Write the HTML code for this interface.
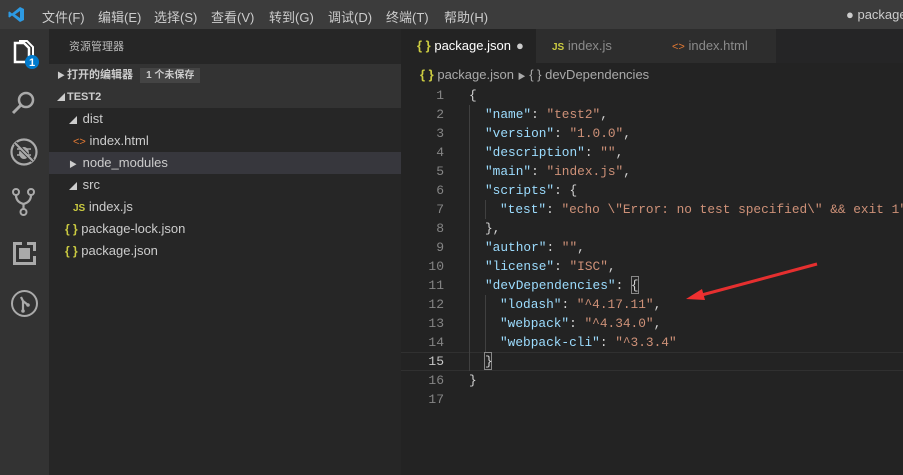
<!DOCTYPE html>
<html><head><meta charset="utf-8"><style>
*{margin:0;padding:0;box-sizing:border-box}
body{width:903px;height:475px;overflow:hidden;background:#232323;font-family:"Liberation Sans","Noto Sans CJK SC",sans-serif;position:relative;color:#ccc}
.abs{position:absolute}
#title{left:0;top:0;width:903px;height:29px;background:#3c3c3c;font-size:13px;color:#ccc;overflow:hidden}
#title span{position:absolute;top:7px;white-space:nowrap}
#act{left:0;top:29px;width:49px;height:446px;background:#333}
#side{left:49px;top:29px;width:352px;height:446px;background:#262626}
.row{position:absolute;left:0;width:352px;height:22px;line-height:22px;font-size:13px;color:#ccc;white-space:nowrap}
.tri{display:inline-block;font-size:8px;color:#ccc;width:10px}
#tabs{left:401px;top:29px;width:502px;height:34px;background:#252526}
.tab{position:absolute;top:0;height:34px;line-height:33px;font-size:13px;padding-left:16px;background:#2d2d2d;color:#8b8b8b;white-space:nowrap}
.code{position:absolute;left:401px;font-family:"Liberation Mono",monospace;font-size:12.8px;height:19px;line-height:19px;white-space:pre}
.ln{position:absolute;left:401px;width:43px;text-align:right;font-family:"Liberation Mono",monospace;font-size:13px;color:#858585;height:19px;line-height:19px}
.k{color:#9cdcfe}.s{color:#ce9178}.p{color:#d4d4d4}
.y{color:#cbcb41;font-weight:bold}
.o{color:#e37933}
</style></head><body>
<div id="title" class="abs">
<svg class="abs" style="left:8px;top:6px" width="17" height="17" viewBox="0 0 17 17"><path d="M12 1 L16 3 V14 L12 16 L4 9.5 L1.5 11.5 L0.5 11 V6 L1.5 5.5 L4 7.5 Z M12 5 L7 8.5 L12 12 Z" fill="#2d9ae3" fill-rule="evenodd"/></svg>
<span style="left:42px">文件(F)</span><span style="left:98px">编辑(E)</span><span style="left:154px">选择(S)</span><span style="left:211px">查看(V)</span><span style="left:269px">转到(G)</span><span style="left:328px">调试(D)</span><span style="left:386px">终端(T)</span><span style="left:444px">帮助(H)</span>
<span style="left:846px">● package.json</span>
</div>
<div id="act" class="abs">
<svg class="abs" style="left:10px;top:11px" width="30" height="30" viewBox="0 0 30 30"><path d="M5 3 h9 l5 5 v14 h-14 z" fill="none" stroke="#fff" stroke-width="2.5"/><path d="M9 1 h8 l6 6 v12" fill="none" stroke="#fff" stroke-width="2"/><circle cx="22" cy="22" r="7" fill="#007acc"/><text x="22" y="26" font-size="11" fill="#fff" text-anchor="middle" font-family="Liberation Sans" font-weight="bold">1</text></svg>
<svg class="abs" style="left:10px;top:60px" width="28" height="28" viewBox="0 0 28 28"><circle cx="16" cy="11" r="7" fill="none" stroke="#aaa" stroke-width="2.5"/><path d="M11 16 L3 24" stroke="#aaa" stroke-width="3"/></svg>
<svg class="abs" style="left:9px;top:108px" width="30" height="30" viewBox="0 0 30 30"><circle cx="15" cy="15" r="12.5" fill="none" stroke="#aaa" stroke-width="2.2"/><ellipse cx="15" cy="16" rx="5" ry="6" fill="#aaa"/><path d="M6 6 L24 24" stroke="#333" stroke-width="4"/><path d="M6 6 L24 24" stroke="#aaa" stroke-width="2"/><path d="M8 12 h4 M18 12 h4 M8 18 h4 M18 18 h4" stroke="#aaa" stroke-width="1.5"/></svg>
<svg class="abs" style="left:11px;top:158px" width="26" height="30" viewBox="0 0 26 30"><circle cx="5" cy="5" r="3" fill="none" stroke="#aaa" stroke-width="2"/><circle cx="20" cy="5" r="3" fill="none" stroke="#aaa" stroke-width="2"/><circle cx="12.5" cy="25" r="3" fill="none" stroke="#aaa" stroke-width="2"/><path d="M5 8 Q5 15 12.5 17 Q20 15 20 8 M12.5 17 V22" fill="none" stroke="#aaa" stroke-width="2.2"/></svg>
<svg class="abs" style="left:13px;top:213px" width="23" height="23" viewBox="0 0 23 23"><path d="M0 0 h9 v3 h-6 v17 h17 v-6 h3 v9 h-23 z M14 0 h9 v9 h-3 v-6 h-6 z" fill="#aaa"/><rect x="6" y="6" width="11" height="11" fill="#aaa"/></svg>
<svg class="abs" style="left:10px;top:260px" width="29" height="29" viewBox="0 0 29 29"><circle cx="14.5" cy="14.5" r="12.5" fill="none" stroke="#aaa" stroke-width="2"/><path d="M11 8 L13 12 V22 M13 12 L18 16" stroke="#aaa" stroke-width="2.2" fill="none"/><circle cx="13" cy="22" r="1.8" fill="#aaa"/><circle cx="18" cy="16" r="1.8" fill="#aaa"/></svg>
</div>
<div id="side" class="abs">
<div class="row" style="top:7px;left:20px;font-size:11px;color:#bbb">资源管理器</div>
<div class="row" style="top:35px;background:#333;font-size:11px;font-weight:bold;padding-left:8px;height:22px"><span class="tri">▶</span>打开的编辑器 <span style="background:#444;padding:0 6px;font-size:10px;margin-left:4px;display:inline-block;line-height:15px">1 个未保存</span></div>
<div class="row" style="top:57px;background:#333;font-size:11px;font-weight:bold;padding-left:8px"><span class="tri">◢</span>TEST2</div>
<div class="row" style="top:79px;padding-left:20px"><span class="tri">◢</span> dist</div>
<div class="row" style="top:101px;padding-left:24px"><span class="o" style="font-size:11px">&lt;&gt;</span> index.html</div>
<div class="row" style="top:123px;background:#37373d;padding-left:20px"><span class="tri">▶</span> node_modules</div>
<div class="row" style="top:145px;padding-left:20px"><span class="tri">◢</span> src</div>
<div class="row" style="top:167px;padding-left:24px"><span class="y" style="font-size:10px">JS</span> index.js</div>
<div class="row" style="top:189px;padding-left:16px"><span class="y" style="font-size:12px">{ }</span> package-lock.json</div>
<div class="row" style="top:211px;padding-left:16px"><span class="y" style="font-size:12px">{ }</span> package.json</div>
</div>
<div id="tabs" class="abs">
<div class="tab" style="left:0;width:135px;background:#232323;color:#fff"><span class="y">{ }</span> package.json <span style="position:absolute;left:115px;color:#ccc">●</span></div>
<div class="tab" style="left:135px;width:120px"><span class="y" style="font-size:10px">JS</span> index.js</div>
<div class="tab" style="left:255px;width:120px"><span class="o" style="font-size:11px">&lt;&gt;</span> index.html</div>
</div>
<div class="abs" style="left:420px;top:67px;font-size:13px;color:#aaa;white-space:nowrap"><span class="y">{ }</span> package.json <span style="font-size:8px">▶</span> { } devDependencies</div>
<div class="abs" style="left:401px;top:352px;width:502px;height:19px;border-top:1px solid #303030;border-bottom:1px solid #303030"></div>
<div class="abs" style="left:469px;top:105px;width:1px;height:266px;background:#404040"></div>
<div class="abs" style="left:485px;top:200px;width:1px;height:19px;background:#404040"></div>
<div class="abs" style="left:485px;top:295px;width:1px;height:57px;background:#404040"></div>
<div class="abs" style="left:631px;top:276px;width:8px;height:18px;border:1px solid #888"></div>
<div class="abs" style="left:484px;top:352px;width:8px;height:18px;border:1px solid #888"></div>
<div class="ln" style="top:86px">1</div><div class="code p" style="left:469px;top:86px">{</div>
<div class="ln" style="top:105px">2</div><div class="code" style="left:485px;top:105px"><span class="k">"name"</span><span class="p">: </span><span class="s">"test2"</span><span class="p">,</span></div>
<div class="ln" style="top:124px">3</div><div class="code" style="left:485px;top:124px"><span class="k">"version"</span><span class="p">: </span><span class="s">"1.0.0"</span><span class="p">,</span></div>
<div class="ln" style="top:143px">4</div><div class="code" style="left:485px;top:143px"><span class="k">"description"</span><span class="p">: </span><span class="s">""</span><span class="p">,</span></div>
<div class="ln" style="top:162px">5</div><div class="code" style="left:485px;top:162px"><span class="k">"main"</span><span class="p">: </span><span class="s">"index.js"</span><span class="p">,</span></div>
<div class="ln" style="top:181px">6</div><div class="code" style="left:485px;top:181px"><span class="k">"scripts"</span><span class="p">: {</span></div>
<div class="ln" style="top:200px">7</div><div class="code" style="left:500px;top:200px"><span class="k">"test"</span><span class="p">: </span><span class="s">"echo \"Error: no test specified\" &amp;&amp; exit 1"</span></div>
<div class="ln" style="top:219px">8</div><div class="code p" style="left:485px;top:219px">},</div>
<div class="ln" style="top:238px">9</div><div class="code" style="left:485px;top:238px"><span class="k">"author"</span><span class="p">: </span><span class="s">""</span><span class="p">,</span></div>
<div class="ln" style="top:257px">10</div><div class="code" style="left:485px;top:257px"><span class="k">"license"</span><span class="p">: </span><span class="s">"ISC"</span><span class="p">,</span></div>
<div class="ln" style="top:276px">11</div><div class="code" style="left:485px;top:276px"><span class="k">"devDependencies"</span><span class="p">: {</span></div>
<div class="ln" style="top:295px">12</div><div class="code" style="left:500px;top:295px"><span class="k">"lodash"</span><span class="p">: </span><span class="s">"^4.17.11"</span><span class="p">,</span></div>
<div class="ln" style="top:314px">13</div><div class="code" style="left:500px;top:314px"><span class="k">"webpack"</span><span class="p">: </span><span class="s">"^4.34.0"</span><span class="p">,</span></div>
<div class="ln" style="top:333px">14</div><div class="code" style="left:500px;top:333px"><span class="k">"webpack-cli"</span><span class="p">: </span><span class="s">"^3.3.4"</span></div>
<div class="ln" style="top:352px;color:#c6c6c6">15</div><div class="code p" style="left:485px;top:352px">}</div>
<div class="ln" style="top:371px">16</div><div class="code p" style="left:469px;top:371px">}</div>
<div class="ln" style="top:390px">17</div>
<svg class="abs" style="left:680px;top:255px" width="150" height="55"><path d="M137 9 L18 41" stroke="#f03030" stroke-width="3" fill="none" opacity="0.95"/><path d="M6 44 L22 34 L25 45 Z" fill="#f03030"/></svg>
</body></html>
